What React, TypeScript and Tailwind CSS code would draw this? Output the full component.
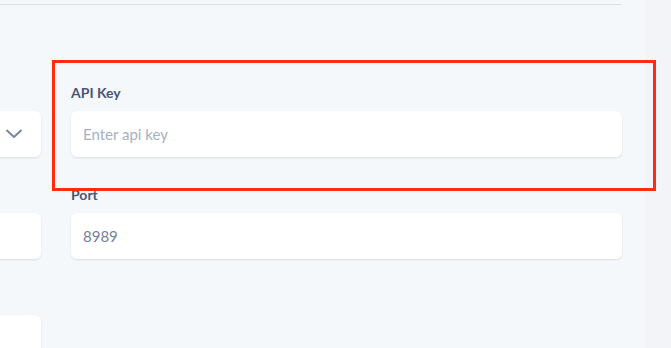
import React from "react";

const Label = ({ children }: { children?: React.ReactNode }) => (
  <div className="h-5 mb-2 text-[14px] leading-5 font-bold text-[#4a5573] whitespace-nowrap">{children}</div>
);

const boxCls =
  "h-[46px] w-full rounded-md bg-white shadow-[0_1px_2px_rgba(30,41,59,0.12)] flex items-center px-3 text-[15px]";

export default function App() {
  return (
    <div
      className="relative w-[671px] h-[348px] overflow-hidden flex bg-[#f2f4f8]"
      style={{ fontFamily: "Lato, 'Open Sans', sans-serif" }}
    >
      <div className="w-[646px] h-full bg-[#f5f8fb] overflow-hidden">
        <div className="pt-1 pr-6">
          <div className="h-px bg-[#dde1e7]" />
        </div>
        <div className="mt-[78px] -ml-[510px] grid grid-cols-[551px_551px] gap-x-[30px] gap-y-[28px]">
          <div>
            <Label />
            <div className={boxCls + " justify-end"}>
              <svg width="18" height="10" viewBox="0 0 18 10" className="mr-[6px]">
                <path d="M2 1.5 L9 8 L16 1.5" fill="none" stroke="#7b879e" strokeWidth="2" strokeLinecap="round" strokeLinejoin="round" />
              </svg>
            </div>
          </div>
          <div>
            <Label>API Key</Label>
            <div className={boxCls + " text-[#a7b0bf]"}>Enter api key</div>
          </div>
          <div>
            <Label />
            <div className={boxCls} />
          </div>
          <div>
            <Label>Port</Label>
            <div className={boxCls + " text-[#74819a]"}>8989</div>
          </div>
          <div>
            <Label />
            <div className={boxCls} />
          </div>
        </div>
      </div>
      <div className="absolute left-[52px] top-[60px] w-[604px] h-[131px] border-[3px] border-[#ff2a12] pointer-events-none" />
    </div>
  );
}
